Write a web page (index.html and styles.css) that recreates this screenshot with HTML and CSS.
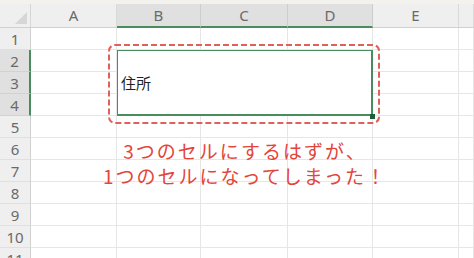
FILE: index.html
```html
<!DOCTYPE html>
<html lang="ja">
<head>
  <meta charset="UTF-8" />
  <title>住所 - セル結合</title>
  <link rel="stylesheet" href="styles.css">
</head>
<body>
  <div class="top-strip"></div>

  <div class="sheet-wrap">
    <div class="sheet">
      <div class="merged">住所</div>

      <div class="corner"></div>
      <div class="hd">A</div>
      <div class="hd sel">B</div>
      <div class="hd sel">C</div>
      <div class="hd sel">D</div>
      <div class="hd">E</div>
      <div class="hd"></div>

      <div class="rh">1</div><div class="c"></div><div class="c"></div><div class="c"></div><div class="c"></div><div class="c"></div><div class="c"></div>
      <div class="rh sel">2</div><div class="c"></div><div class="c"></div><div class="c"></div>
      <div class="rh sel">3</div><div class="c"></div><div class="c"></div><div class="c"></div>
      <div class="rh sel">4</div><div class="c"></div><div class="c"></div><div class="c"></div>
      <div class="rh">5</div><div class="c"></div><div class="c"></div><div class="c"></div><div class="c"></div><div class="c"></div><div class="c"></div>
      <div class="rh">6</div><div class="c"></div><div class="c"></div><div class="c"></div><div class="c"></div><div class="c"></div><div class="c"></div>
      <div class="rh">7</div><div class="c"></div><div class="c"></div><div class="c"></div><div class="c"></div><div class="c"></div><div class="c"></div>
      <div class="rh">8</div><div class="c"></div><div class="c"></div><div class="c"></div><div class="c"></div><div class="c"></div><div class="c"></div>
      <div class="rh">9</div><div class="c"></div><div class="c"></div><div class="c"></div><div class="c"></div><div class="c"></div><div class="c"></div>
      <div class="rh">10</div><div class="c"></div><div class="c"></div><div class="c"></div><div class="c"></div><div class="c"></div><div class="c"></div>
      <div class="rh">11</div><div class="c"></div><div class="c"></div><div class="c"></div><div class="c"></div><div class="c"></div><div class="c"></div>
    </div>

    <!-- annotation on top of the grid -->
    <svg class="dash-box" width="272" height="80" viewBox="0 0 272 80">
      <rect x="1" y="1" width="270" height="78" rx="6" ry="6" fill="none"
            stroke="#e0605a" stroke-width="2" stroke-dasharray="6 3"/>
    </svg>
    <div class="handle"></div>

    <p class="note">3つのセルにするはずが、<br>1つのセルになってしまった！</p>
  </div>
</body>
</html>
```

FILE: styles.css
```css
body {
  margin: 0;
  background: #ffffff;
  font-family: "Noto Sans", "Noto Sans CJK JP", sans-serif;
  overflow: hidden;
}

.top-strip {
  height: 4px;
  background: #f4f2ee;
}

.sheet-wrap {
  position: relative;
  height: 254px;
  overflow: hidden;
}

.sheet {
  display: grid;
  grid-template-columns: 31px 86px 84px 87px 85px 86px 15px;
  grid-template-rows: 24px;
  grid-auto-rows: 22px;
}

.sheet > div {
  box-sizing: border-box;
}

.corner {
  position: relative;
  background: #efefef;
  border-right: 1px solid #d6d6d6;
  border-bottom: 1px solid #d0d0d0;
}

.corner::after {
  content: "";
  position: absolute;
  right: 3px;
  bottom: 3px;
  width: 0;
  height: 0;
  border-left: 12px solid transparent;
  border-bottom: 12px solid #d6d6d6;
}

.hd {
  background: #efefef;
  border-right: 1px solid #dadada;
  border-bottom: 1px solid #d0d0d0;
  color: #6a6a6a;
  font-size: 15px;
  line-height: 23px;
  text-align: center;
}

.hd.sel {
  background: #e0e0e0;
  border-bottom: 2px solid #4a8c5e;
  border-right-color: #cdcdcd;
}

.rh {
  background: #efefef;
  border-right: 1px solid #d0d0d0;
  border-bottom: 1px solid #e0e0e0;
  color: #6a6a6a;
  font-size: 15px;
  line-height: 22px;
  text-align: center;
}

.rh.sel {
  background: #e0e0e0;
  border-right: 2px solid #4a8c5e;
  border-bottom-color: #d2d2d2;
}

.c {
  border-right: 1px solid #e6e6e6;
  border-bottom: 1px solid #e6e6e6;
}

.merged {
  grid-column: 3 / 6;
  grid-row: 3 / 6;
  display: flex;
  align-items: center;
  padding-left: 3px;
  margin: -1px 0 0 -1px;
  border: 2px solid #4a8c5e;
  background: #ffffff;
  color: #222222;
  font-family: "Noto Sans CJK JP", sans-serif;
  font-size: 15px;
}

.dash-box {
  position: absolute;
  left: 108px;
  top: 40px;
}

.handle {
  position: absolute;
  left: 370px;
  top: 110px;
  width: 5px;
  height: 5px;
  background: #1f5e38;
}

.note {
  position: absolute;
  left: 31px;
  top: 134px;
  width: 428px;
  margin: 0;
  color: #e3453a;
  font-family: "Noto Sans CJK JP", sans-serif;
  font-size: 19px;
  letter-spacing: 2px;
  line-height: 25px;
  text-align: center;
}
```
